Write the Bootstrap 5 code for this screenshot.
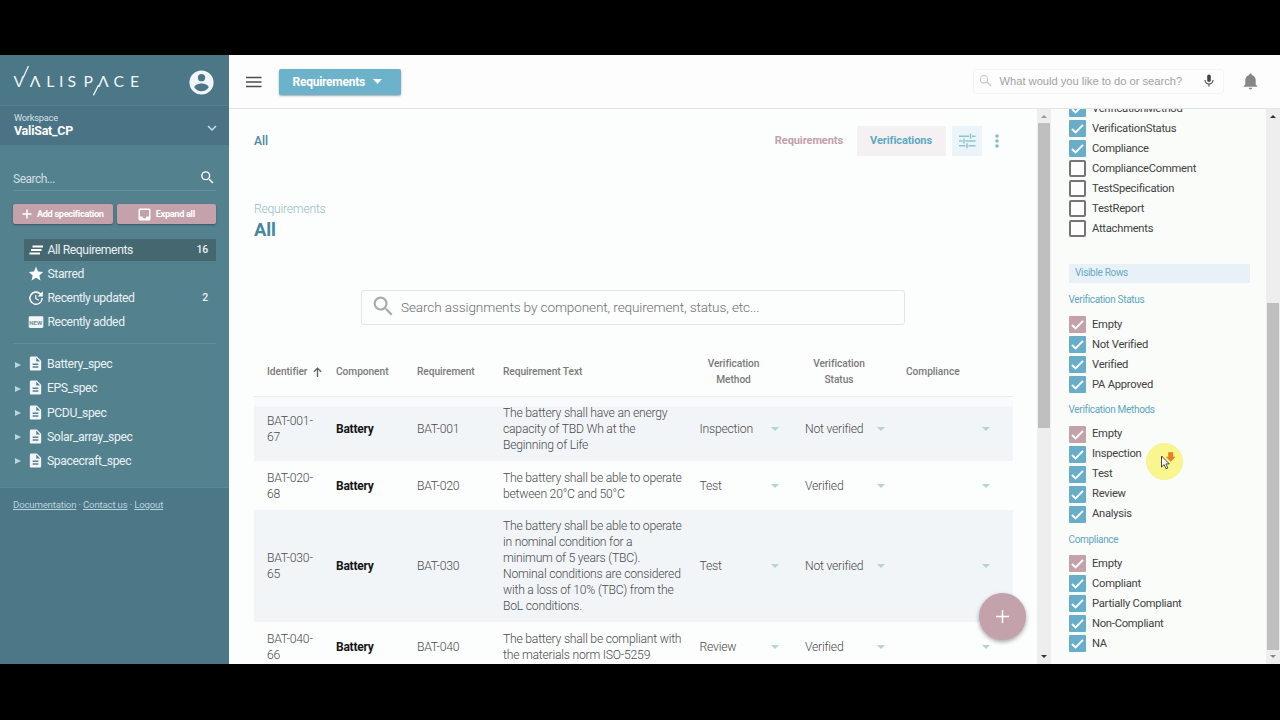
<!DOCTYPE html>
<html lang="en">
<head>
<meta charset="utf-8">
<meta name="viewport" content="width=device-width, initial-scale=1">
<title>Valispace - Requirements</title>
<link href="https://cdn.jsdelivr.net/npm/bootstrap@5.3.0/dist/css/bootstrap.min.css" rel="stylesheet">
<style>
  body { font-family: Roboto, "Liberation Sans", sans-serif; font-size: 12px; line-height: 16px; color: #4c4c4c; background: #000; }
  svg { display: block; flex: none; }
  .screen { width: 1280px; height: 720px; padding: 55px 0 56px; background: #000; overflow: hidden; }
  .app { height: 609px; background: #fcfdfd; overflow: hidden; }

  /* sidebar */
  .side { width: 229px; flex: none; background: #4b7787; color: #e9f2f4; }
  .side-top { height: 50px; padding: 0 13px 0 12px; }
  .workspace { height: 41px; padding: 6px 12.5px 0 14px; background: #4a7486; border-top: 1px solid #547f8f; border-bottom: 1px solid #558090; }
  .workspace small { display: block; font-size: 9.2px; line-height: 11px; color: #d3e2e6; letter-spacing: -.2px; }
  .workspace strong { display: block; font-size: 12.4px; line-height: 15px; color: #fff; letter-spacing: -.2px; }
  .side-body { height: 341.5px; padding: 20px 13px 0; background: #54818e; border-bottom: 1px solid #5c8894; }
  .side-search { height: 25px; border-bottom: 1px solid #63919c; color: #cfdfe3; letter-spacing: -.5px; }
  .btn-rose { --bs-btn-color: #fff; --bs-btn-bg: #c4a2ac; --bs-btn-border-width: 0; --bs-btn-hover-bg: #b7929d; --bs-btn-hover-color: #fff;
    --bs-btn-border-radius: 2px; --bs-btn-padding-x: 0; --bs-btn-padding-y: 0; flex: 1 1 0; height: 20px; font-size: 9.2px; font-weight: 700; letter-spacing: -.32px;
    box-shadow: 0 1px 2px rgba(0,0,0,.35); white-space: nowrap; }
  .side-link { height: 24.1px; padding: 0 8px 0 4px; font-size: 12.2px; letter-spacing: -.48px; color: #e9f2f4; text-decoration: none; margin-left: 11px; letter-spacing: -.42px; }
  .side-link svg { margin-right: 3.5px; }
  .side-link.active { background: #45676f; height: 22px; margin-top: 1px; margin-bottom: 1px; }
  .side-link .num { font-size: 10.5px; font-weight: 500; letter-spacing: -.2px; }
  .side-rule { height: 1px; background: #628f9b; margin: 9px 0 8px; }
  .spec { height: 24.15px; font-size: 12.2px; letter-spacing: -.4px; padding-left: 2px; }
  .side-foot { padding: 10.5px 13px; font-size: 9.6px; line-height: 14px; letter-spacing: -.17px; color: #b9d3dc; }
  .side-foot a { color: #b9d3dc; }

  /* top bar */
  .topbar { height: 54px; padding: 0 22.5px 0 17px; border-bottom: 1px solid #e2e4e6; background: #fdfdfd; }
  .btn-sky { --bs-btn-color: #fff; --bs-btn-bg: #6db2cb; --bs-btn-hover-bg: #5ba4bf; --bs-btn-hover-color: #fff; --bs-btn-border-width: 0;
    --bs-btn-border-radius: 2px; --bs-btn-padding-y: 0; --bs-btn-padding-x: 13.5px; width: 122px; height: 26px; font-size: 12px; font-weight: 700; letter-spacing: -.25px;
    box-shadow: 0 1px 2px rgba(0,0,0,.35); }
  .ask { width: 251px; height: 25px; border: 1px solid #f3f4f4; border-radius: 3px; padding: 0 9px 2px 5px; font: 11.15px "Liberation Sans", Arial, sans-serif; color: #a2a2a2; }

  /* main column */
  .main { width: 808px; flex: none; padding: 17px 24px 0 25px; overflow: hidden; }
  .crumb { font-size: 12px; font-weight: 500; color: #4c87a0; }
  .tab { height: 30px; font-size: 11px; font-weight: 700; letter-spacing: -.08px; color: #c1a1ab; }
  .tab.on { width: 89px; background: #f5f1f3; color: #60a8c2; }
  .tune { width: 30px; height: 30px; background: #eaf4f9; }
  .sup { font-size: 12.2px; font-weight: 300; line-height: 16px; letter-spacing: -.25px; color: #94bcc4; margin-top: 45px; }
  .big { font-size: 18.5px; font-weight: 700; line-height: 22px; color: #4887a0; margin: 1.5px 0 0; letter-spacing: -.2px; }
  .find { width: 544px; height: 35px; margin: 49px 0 0 107px; border: 1px solid #e3e5e6; border-radius: 3px; padding: 0 11px; font-size: 13.6px; font-weight: 300; letter-spacing: -.12px; color: #707070; }
  .grid { width: 758.5px; table-layout: fixed; margin: 24px 0 0; font-weight: 300; border-collapse: collapse; font-size: 12.2px; letter-spacing: -.23px; color: #4b4b4b; }
  .grid th { height: 48px; padding: 0; font-size: 10.2px; line-height: 16.6px; font-weight: 500; letter-spacing: -.06px; color: #7a7a7a; vertical-align: middle; border-bottom: 1px solid #e9edef; }
  .grid td { padding: 0; line-height: 16.1px; vertical-align: middle; }
  .grid tbody tr:nth-child(odd) { background: #f1f5f8; }
  .grid tbody tr:first-child { background: linear-gradient(#f9fafb 0 9px, #f1f5f8 10px); }
  .grid tr > :first-child { padding-left: 13px; }
  .grid .comp { font-weight: 700; font-size: 12px; color: #161616; }
  .grid .pick { padding-right: 26px; }
  .grid .pick:last-child { padding-right: 22.5px; }
  .tri { width: 0; height: 0; border: 4px solid transparent; border-top-color: #b4d3d5; border-bottom: 0; flex: none; }
  .r-a { height: 64.5px; } .r-b { height: 49.2px; } .r-c { height: 111.5px; } .r-d { height: 50px; }
  .fab { right: 11px; bottom: 24px; width: 47px; height: 47px; border-radius: 50%; background: #c4a2ac; box-shadow: 0 2px 4px rgba(0,0,0,.35); }

  /* scroll bars */
  .bar { flex: none; background: #eeeeee; }
  .thumb { background: #bfbfbf; margin: 0 1px; }
  .up { width: 0; height: 0; border: 3px solid transparent; border-bottom: 3px solid #999; border-top: 0; margin: 6px auto 5px; }
  .down { width: 0; height: 0; border: 3px solid transparent; border-top: 3px solid #333; border-bottom: 0; margin: auto auto 6px; }

  /* filter panel */
  .filters { width: 215px; flex: none; background: #fafcfa; padding: 0 16.5px 0 17.5px; overflow: hidden; color: #414141; letter-spacing: -.25px; font-size: 11.2px; }
  .opt { height: 20px; gap: 6.5px; }
  .box { width: 17px; height: 17px; flex: none; background: #68aec9; border-radius: 1px; }
  .box.rose { background: #c4a2ac; }
  .box.off { background: #fcfdfc; border: 2px solid #757575; border-radius: 2px; }
  .band { height: 19px; background: #e7f1f7; color: #66abc3; padding: 0 6.5px; font-size: 10px; line-height: 17px; margin-top: 25px; }
  .head { color: #5ca5bd; font-size: 10px; line-height: 12px; }
  .head, .band { letter-spacing: -.32px; }
  .halo { left: 1146px; top: 443px; width: 37px; height: 37px; border-radius: 50%; background: #f9f68e; border: 1px solid #f5f19b; }
</style>
</head>
<body>
<svg width="0" height="0" class="position-absolute" aria-hidden="true">
  <symbol id="i-search" viewBox="0 0 24 24"><path d="M15.5 14h-.79l-.28-.27A6.47 6.47 0 0 0 16 9.5 6.5 6.5 0 1 0 9.5 16c1.61 0 3.09-.59 4.23-1.57l.27.28v.79l5 4.99L20.49 19zm-6 0a4.5 4.5 0 1 1 0-9 4.5 4.5 0 0 1 0 9z"/></symbol>
  <symbol id="i-user" viewBox="0 0 24 24"><path d="M12 2a10 10 0 1 0 0 20 10 10 0 0 0 0-20zm0 3a3 3 0 1 1 0 6 3 3 0 0 1 0-6zm0 14.2A7.2 7.2 0 0 1 6 16c.03-2 4-3.1 6-3.1s5.97 1.1 6 3.1a7.2 7.2 0 0 1-6 3.2z"/></symbol>
  <symbol id="i-doc" viewBox="0 0 24 24"><path fill-rule="evenodd" d="M14 2H6a2 2 0 0 0-2 2v16c0 1.1.9 2 2 2h12a2 2 0 0 0 2-2V8zm2 16H8v-2h8zm0-4H8v-2h8zm-3-5V3.500L18.500 9z"/></symbol>
  <symbol id="i-check" viewBox="0 0 17 17"><path d="M3 9l3.600 3.500L14 4.800" fill="none" stroke="#fff" stroke-width="1.900"/></symbol>
</svg>

<div class="screen">
<div class="app d-flex">

  <aside class="side d-flex flex-column">
    <div class="side-top d-flex align-items-center justify-content-between">
      <svg width="130" height="34" viewBox="0 0 130 34" role="img" aria-label="Valispace">
        <text y="23.8" x="1.4 17.8 34.2 47 55.6 71.600 86 101.400 118" font-family="Lato" font-weight="400" font-size="15.800" fill="#eef5f7">VΛLISPΛCE</text>
        <path d="M11.300 14.200L16.500 3M81.400 32.400l5.200-10.400" stroke="#eef5f7" stroke-width="1.300"/>
      </svg>
      <svg width="29" height="29" fill="#f2f6fa" class="mt-1"><use href="#i-user"/></svg>
    </div>
    <div class="workspace d-flex justify-content-between">
      <div><small>Workspace</small><strong>ValiSat_CP</strong></div>
      <svg style="margin-top:8px" width="10" height="16" viewBox="0 0 10 16"><path d="M1 6l4 4 4-4" fill="none" stroke="#c6e0ea" stroke-width="1.500"/></svg>
    </div>
    <div class="side-body">
      <div class="side-search d-flex align-items-center justify-content-between"><span style="padding-top:2px">Search...</span>
        <svg width="17" height="17" fill="#fff" style="margin-top:-2px"><use href="#i-search"/></svg></div>
      <div class="d-flex" style="gap:4px;margin-top:13px">
        <button class="btn btn-rose d-flex align-items-center justify-content-center" type="button"><svg width="10" height="10" viewBox="0 0 10 10" style="margin-right:5px"><path d="M5 .5v9M.5 5h9" stroke="#fff" stroke-width="1.500"/></svg>Add specification</button>
        <button class="btn btn-rose d-flex align-items-center justify-content-center" type="button"><svg width="13" height="13" viewBox="0 0 13 13" style="margin-right:5px"><path fill="#fff" fill-rule="evenodd" d="M2 .5h9a1.500 1.500 0 0 1 1.500 1.500v9a1.500 1.500 0 0 1-1.500 1.500H2A1.500 1.500 0 0 1 .5 11V2A1.500 1.500 0 0 1 2 .5zM2 2v6.500h2.500a2 2 0 0 0 4 0H11V2z"/></svg>Expand all</button>
      </div>
      <nav style="margin-top:15px">
        <a class="side-link active d-flex align-items-center" href="#"><svg width="16" height="16" viewBox="0 0 16 16"><path d="M4.500 4.500H15M3 8h10.500M1.500 11.500H12" stroke="#fff" stroke-width="2"/></svg>All Requirements<span class="num ms-auto">16</span></a>
        <a class="side-link d-flex align-items-center" href="#"><svg width="16" height="16" viewBox="1 1 22 22" fill="#fff"><path d="M12 17.300l6.200 3.700-1.600-7L22 9.200l-7.200-.6L12 2 9.200 8.600 2 9.200 7.500 14l-1.700 7z"/></svg>Starred</a>
        <a class="side-link d-flex align-items-center" href="#"><svg width="16" height="16" viewBox="1.500 1.500 21 21" fill="#fff"><path d="M21 10.100h-6.800l2.700-2.800a7 7 0 1 0 2.100 4.800h2A9 9 0 1 1 18.300 5.700L21 3zM12.500 8v4.300l3.500 2.100-.7 1.200-4.300-2.600V8z"/></svg>Recently updated<span class="num ms-auto">2</span></a>
        <a class="side-link d-flex align-items-center" href="#"><svg width="16" height="16" viewBox="0 0 16 16"><rect x=".7" y="2.300" width="14.600" height="11.600" rx="1.300" fill="#f2f6fa"/><text x="7.800" y="10.500" font-size="6" font-weight="700" letter-spacing="0" text-anchor="middle" fill="#6b929d">NEW</text></svg>Recently added</a>
      </nav>
      <div class="side-rule"></div>
      <div id="specs"></div>
    </div>
    <div class="side-foot"><a href="#">Documentation</a> · <a href="#">Contact us</a> · <a href="#">Logout</a></div>
  </aside>

  <div class="flex-grow-1 d-flex flex-column">
    <header class="topbar d-flex align-items-center">
      <svg width="16" height="12" viewBox="0 0 16 12"><path d="M0 1.500h15.500M0 6h15.500M0 10.500h15.500" stroke="#4c4c50" stroke-width="1.500"/></svg>
      <button class="btn btn-sky d-flex align-items-center" type="button" style="margin-left:17px">Requirements<svg width="9" height="5" viewBox="0 0 9 5" style="margin-left:8.500px"><path d="M0 0h9L4.500 5z" fill="#fff"/></svg></button>
      <div class="ask d-flex align-items-center ms-auto">
        <svg width="13" height="13" viewBox="0 0 13 13" class="me-2"><path d="M8 8l4 4M8.700 5.200a3.700 3.700 0 1 1-7.400 0 3.700 3.700 0 0 1 7.400 0z" fill="none" stroke="#c4c4c4" stroke-width="1.100"/></svg>
        <span>What would you like to do or search?</span>
        <svg width="10" height="14" viewBox="0 0 10 14" class="ms-auto"><rect x="3.200" y=".5" width="3.600" height="7.500" rx="1.800" fill="#444"/><path d="M1 6a4 4 0 0 0 8 0M5 10v2.500" fill="none" stroke="#444" stroke-width="1.100"/></svg>
      </div>
      <svg width="15" height="17" viewBox="0 0 15 17" style="margin-left:19px;margin-top:-1px"><path d="M7.500.5a1.300 1.300 0 0 1 1.300 1.400c2.500.6 3.900 2.700 3.900 5.200v4.300l1.500 1.600v.8H.8V13l1.500-1.600V7.100c0-2.500 1.400-4.600 3.900-5.200A1.300 1.300 0 0 1 7.500.5zM5.800 14.700h3.400a1.700 1.700 0 0 1-3.400 0z" fill="#868686"/></svg>
    </header>

    <div class="d-flex position-relative" style="height:555px">
      <main class="main position-relative">
        <div class="d-flex align-items-center">
          <span class="crumb">All</span>
          <span class="tab d-flex align-items-center ms-auto">Requirements</span>
          <span class="tab on d-flex align-items-center justify-content-center" style="margin-left:13.500px">Verifications</span>
          <span class="tune d-flex align-items-center justify-content-center" style="margin-left:6.500px"><svg width="17" height="16" viewBox="0 0 17 16"><path d="M0 3.200h10M13 3.200h3.500M11.500.7v5M0 8h3.500M6.500 8h10M5 5.500v5M0 12.800h6.500M9.500 12.800h7M8 10.300v5" stroke="#90c3cf" stroke-width="1.500"/></svg></span>
          <svg width="4" height="14" viewBox="0 0 4 14" fill="#86bdc9" style="margin:0 14px 0 13px"><circle cx="2" cy="2" r="1.800"/><circle cx="2" cy="7" r="1.800"/><circle cx="2" cy="12" r="1.800"/></svg>
        </div>
        <div class="sup">Requirements</div>
        <h1 class="big">All</h1>
        <div class="find d-flex align-items-center"><svg width="20" height="20" viewBox="2.500 2.500 18.500 18.500" fill="#a9abac" style="margin:-2px 8px 0 0"><use href="#i-search" width="24" height="24"/></svg>Search assignments by component, requirement, status, etc...</div>
        <table class="grid">
          <colgroup><col style="width:82px"><col style="width:81px"><col style="width:86px"><col style="width:196.500px"><col style="width:105.500px"><col style="width:105.500px"><col></colgroup>
          <thead><tr>
            <th><span class="d-flex align-items-center">Identifier<svg width="9" height="10" viewBox="0 0 9 10" style="margin-left:6px"><path d="M4.500 10V1.500M.8 4.800l3.700-3.600 3.700 3.600" fill="none" stroke="#666" stroke-width="1.400"/></svg></span></th>
            <th>Component</th><th>Requirement</th><th>Requirement Text</th>
            <th><div class="text-center" style="width:68px">Verification Method</div></th>
            <th><div class="text-center" style="width:68px">Verification Status</div></th>
            <th><div style="margin-left:-4.500px">Compliance</div></th>
          </tr></thead>
          <tbody>
            <tr class="r-a"><td>BAT-001-<br>67</td><td class="comp">Battery</td><td>BAT-001</td><td>The battery shall have an energy<br>capacity of TBD Wh at the<br>Beginning of Life</td><td class="pick">Inspection</td><td class="pick">Not verified</td><td class="pick"></td></tr>
            <tr class="r-b"><td>BAT-020-<br>68</td><td class="comp">Battery</td><td>BAT-020</td><td>The battery shall be able to operate<br>between 20°C and 50°C</td><td class="pick">Test</td><td class="pick">Verified</td><td class="pick"></td></tr>
            <tr class="r-c"><td>BAT-030-<br>65</td><td class="comp">Battery</td><td>BAT-030</td><td>The battery shall be able to operate<br>in nominal condition for a<br>minimum of 5 years (TBC).<br>Nominal conditions are considered<br>with a loss of 10% (TBC) from the<br>BoL conditions.</td><td class="pick">Test</td><td class="pick">Not verified</td><td class="pick"></td></tr>
            <tr class="r-d"><td>BAT-040-<br>66</td><td class="comp">Battery</td><td>BAT-040</td><td>The battery shall be compliant with<br>the materials norm ISO-5259</td><td class="pick">Review</td><td class="pick">Verified</td><td class="pick"></td></tr>
          </tbody>
        </table>
        <div class="fab position-absolute d-flex align-items-center justify-content-center"><svg width="13" height="13" viewBox="0 0 13 13"><path d="M6.500 0v13M0 6.500h13" stroke="#fff" stroke-width="1.600"/></svg></div>
      </main>
      <div class="bar d-flex flex-column" style="width:14px"><div class="up"></div><div class="thumb" style="height:305px"></div><div class="down"></div></div>
      <div class="filters" id="filters"></div>
      <div class="bar d-flex flex-column flex-grow-1"><div class="up" style="border-bottom-color:#333"></div><div class="thumb" style="height:347px;margin-top:180px"></div><div class="down" style="border-top-color:#888"></div></div>
    </div>
  </div>
</div>
</div>

<div class="halo position-absolute"><svg width="35" height="35" viewBox="0 0 35 35"><path d="M21.500 8.500h4.400v4.500h2.100l-4.300 4.500-4.300-4.500h2.100z" fill="#f07a1c" stroke="#c98a2a" stroke-width=".6"/><path d="M14.500 12v11l2.600-2.400 1.900 4.200 1.800-.8-1.900-4.100h3.400z" fill="#fff" stroke="#333" stroke-width=".9"/></svg></div>

<script>
  document.getElementById('specs').innerHTML = ['Battery_spec', 'EPS_spec', 'PCDU_spec', 'Solar_array_spec', 'Spacecraft_spec'].map(function (n) {
    return '<div class="spec d-flex align-items-center"><svg width="6" height="6" viewBox="0 0 6 6" style="margin-top:1px"><path d="M0 0l6 3-6 3z" fill="#b9d6df"/></svg>' +
      '<svg width="17" height="17" fill="#f2f6fa" style="margin:-1px 3px 0 6px"><use href="#i-doc"/></svg>' + n + '</div>';
  }).join('');

  function opts(list) {
    return list.map(function (o) {
      var kind = o[0] === '-' ? 'off' : o[0] === '*' ? 'rose' : '';
      return '<div class="opt d-flex align-items-center"><span class="box ' + kind + '">' +
        (kind === 'off' ? '' : '<svg width="17" height="17"><use href="#i-check"/></svg>') + '</span>' + o.replace(/^[-*]/, '') + '</div>';
    }).join('');
  }
  document.getElementById('filters').innerHTML =
    '<div style="margin-top:-10.300px">' + opts(['VerificationMethod', 'VerificationStatus', 'Compliance', '-ComplianceComment', '-TestSpecification', '-TestReport', '-Attachments']) + '</div>' +
    '<div class="band">Visible Rows</div>' +
    '<div class="head" style="margin:11.500px 0 8.500px">Verification Status</div>' + opts(['*Empty', 'Not Verified', 'Verified', 'PA Approved']) +
    '<div class="head" style="margin:9.500px 0 8px">Verification Methods</div>' + opts(['*Empty', 'Inspection', 'Test', 'Review', 'Analysis']) +
    '<div class="head" style="margin:9.500px 0 8px">Compliance</div>' + opts(['*Empty', 'Compliant', 'Partially Compliant', 'Non-Compliant', 'NA']);

  document.querySelectorAll('td.pick').forEach(function (td) {
    td.innerHTML = '<div class="d-flex align-items-center justify-content-between"><span>' + td.textContent + '</span><span class="tri"></span></div>';
  });
</script>
<script src="https://cdn.jsdelivr.net/npm/bootstrap@5.3.0/dist/js/bootstrap.bundle.min.js"></script>
</body>
</html>
